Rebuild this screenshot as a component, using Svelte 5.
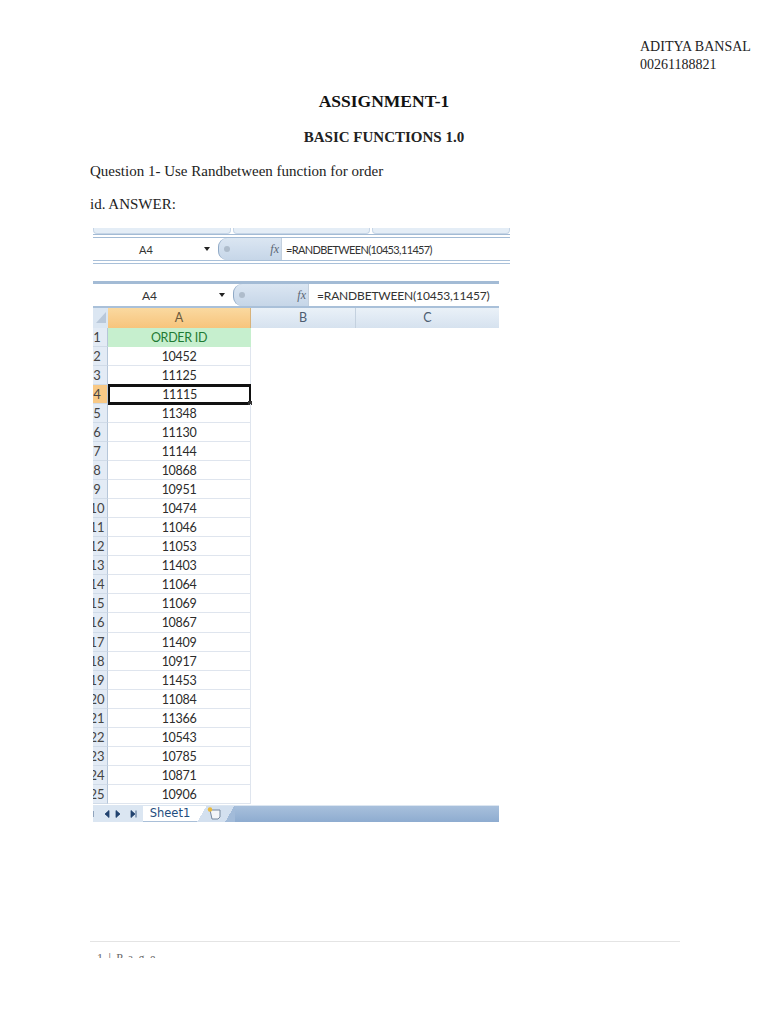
<script lang="ts">
	const ids = [
		10452, 11125, 11115, 11348, 11130, 11144, 10868, 10951, 10474, 11046, 11053, 11403,
		11064, 11069, 10867, 11409, 10917, 11453, 11084, 11366, 10543, 10785, 10871, 10906
	];
	const formula = "=RANDBETWEEN(10453,11457)";
</script>

<main class="page">
	<header class="author">
		<div>ADITYA BANSAL</div>
		<div>00261188821</div>
	</header>

	<h1>ASSIGNMENT-1</h1>
	<h2>BASIC FUNCTIONS 1.0</h2>

	<p class="question">Question 1- Use Randbetween function for order</p>
	<p class="answer">id. ANSWER:</p>

	<div class="crop-bar">
		<div class="ribbon-end">
			<span></span><span></span><span></span>
		</div>
		<div class="formula small">
			<span class="name">A4</span>
			<span class="caret"></span>
			<span class="pill"><i></i><em>fx</em></span>
			<span class="value">{formula}</span>
		</div>
	</div>

	<div class="sheet">
		<div class="formula large">
			<span class="name">A4</span>
			<span class="caret"></span>
			<span class="pill"><i></i><em>fx</em></span>
			<span class="value">{formula}</span>
		</div>

		<div class="grid-head">
			<div class="corner"><svg width="15" height="18" viewBox="0 0 15 18"><path d="M13 4v11H3z" fill="#b9c8da" /></svg></div>
			<div class="col active">A</div>
			<div class="col b">B</div>
			<div class="col c">C</div>
		</div>

		<div class="row">
			<div class="num"><span>1</span></div>
			<div class="cell title">ORDER ID</div>
		</div>
		{#each ids as id, i}
			<div class="row">
				<div class="num" class:on={i === 2}><span>{i + 2}</span></div>
				<div class="cell" class:selected={i === 2}>{id}</div>
			</div>
		{/each}

		<div class="tabs">
			<div class="arrows">
				<svg width="50" height="14" viewBox="0 0 50 14">
					<path d="M0 4v6M16 3.500l-4 3.500 4 3.500zM23 3.500l4 3.500-4 3.500zM38 3.500l4 3.500-4 3.500zM43 3.500v7" fill="#22436f" stroke="#22436f" stroke-width=".8" />
				</svg>
			</div>
			<div class="tab">Sheet1</div>
			<div class="new-tab">
				<svg width="18" height="15" viewBox="0 0 18 15">
					<path d="M5 4h10v7l-2 2H7z" fill="#f4f6f9" stroke="#77889e" />
					<circle cx="5" cy="3.500" r="2.200" fill="#e8b93f" />
				</svg>
			</div>
			<div class="tab-fill"></div>
		</div>
	</div>

	<footer class="foot">
		<span>1 | P a g e</span>
	</footer>
</main>

<style>
	:global(body) {
		background: #fff;
	}

	.page {
		width: 768px;
		height: 1024px;
		box-sizing: border-box;
		padding: 38px 88px 0 90px;
		font-family: "Liberation Serif", "Times New Roman", serif;
		color: #222;
		overflow: hidden;
	}

	.author {
		margin-left: 550px;
		font-size: 14px;
		line-height: 18px;
		white-space: nowrap;
	}

	h1 {
		margin: 18px 0 0 -2px;
		text-align: center;
		font-size: 17.5px;
		line-height: 19px;
		color: #111;
	}

	h2 {
		margin: 17px 0 0 -2px;
		text-align: center;
		font-size: 15px;
		line-height: 19px;
		color: #222;
	}

	.question,
	.answer {
		margin: 0;
		font-size: 15px;
		line-height: 18px;
	}

	.question {
		margin-top: 15px;
	}

	.answer {
		margin-top: 15px;
	}

	.crop-bar {
		margin: 15px 0 0 3px;
		width: 417px;
		font-family: Lato, "Liberation Sans", sans-serif;
	}

	.ribbon-end {
		display: flex;
		gap: 2px;
		height: 6px;
	}

	.ribbon-end span {
		height: 5px;
		border: 1px solid #c6d5e6;
		border-top: 0;
		border-radius: 0 0 4px 4px;
		background: #e4edf6;
		flex: 1;
	}

	.formula {
		display: flex;
		align-items: center;
		box-sizing: border-box;
		color: #333;
		background: #fff;
	}

	.formula.small {
		height: 30px;
		font-size: 11px;
		border-top: 4px double #a3bbd5;
		border-bottom: 4px double #a9c0d9;
	}

	.formula.large {
		height: 27px;
		font-size: 12px;
		border-top: 3px solid #a3bbd5;
		border-bottom: 2px solid #a9c0d9;
	}

	.name {
		flex: none;
	}

	.small .name {
		margin-left: 46px;
		width: 65px;
	}

	.large .name {
		margin-left: 49px;
		width: 77px;
	}

	.caret {
		flex: none;
		width: 0;
		height: 0;
		border: 3px solid transparent;
		border-top: 4px solid #222;
		border-bottom: 0;
	}

	.pill {
		flex: none;
		display: flex;
		align-items: center;
		justify-content: space-between;
		box-sizing: border-box;
		height: 100%;
		margin-left: 8px;
		padding: 0 2px 0 5px;
		border-left: 1px solid #8fa9c6;
		border-radius: 9px 0 0 9px;
		background: linear-gradient(#dbe6f2, #c6d6e8);
		border-right: 1px solid #c3d0de;
	}

	.small .pill {
		width: 64px;
	}

	.large .pill {
		width: 76px;
	}

	.pill i {
		width: 6px;
		height: 6px;
		border-radius: 50%;
		background: #aebccb;
	}

	.pill em {
		font-family: "Liberation Serif", serif;
		font-size: 12px;
		color: #5a6675;
	}

	.small .value {
		margin-left: 4px;
		letter-spacing: -0.650px;
	}

	.large .value {
		margin-left: 8px;
		letter-spacing: -0.170px;
	}

	.sheet {
		margin: 17px 0 0 3px;
		width: 406px;
		font-family: Lato, "Liberation Sans", sans-serif;
		color: #333;
		font-size: 12.500px;
	}

	.grid-head {
		display: flex;
		height: 20px;
		line-height: 20px;
		text-align: center;
		font-size: 12.5px;
		color: #4d5c70;
	}

	.corner {
		width: 15px;
		background: #dbe6f2;
		flex: none;
	}

	.col {
		background: linear-gradient(#eaf1f8, #d6e2ef);
		border-right: 1px solid #c4d1df;
		box-sizing: border-box;
	}

	.col.active {
		width: 143px;
		background: linear-gradient(#fad9a0, #f7c47c);
		border-right: 1px solid #d8b27a;
		color: #6b5a3c;
	}

	.col.b {
		width: 105px;
	}

	.col.c {
		width: 143px;
		border-right: 0;
	}

	.row {
		display: flex;
		height: 19.040px;
		line-height: 19px;
	}

	.num {
		position: relative;
		flex: none;
		width: 15px;
		overflow: hidden;
		background: #e3ebf5;
		border-right: 1px solid #b6c6d9;
		border-bottom: 1px solid #d0dbe8;
		box-sizing: border-box;
		color: #444;
		font-size: 13px;
	}

	.num.on {
		background: #f8c986;
	}

	.num span {
		display: block;
		width: 22px;
		margin-left: -7px;
		text-align: center;
	}

	.cell {
		position: relative;
		box-sizing: border-box;
		width: 143px;
		text-align: center;
		letter-spacing: -0.300px;
		border-right: 1px solid #dfe5ee;
		border-bottom: 1px solid #dfe5ee;
		color: #2b2b2b;
	}

	.cell.title {
		background: #c6efce;
		color: #1e7a34;
		border-color: #c6efce;
	}

	.cell.selected {
		border: 2px solid #111;
		box-shadow: 0 1px 0 #111, 0 -1px 0 #111;
		line-height: 16px;
	}

	.cell.selected::after {
		content: "";
		position: absolute;
		right: -3px;
		bottom: -3px;
		width: 4px;
		height: 4px;
		background: #333;
	}

	.tabs {
		display: flex;
		height: 17px;
		margin-top: 1.500px;
		border-top: 1px solid #dce6f1;
		box-sizing: border-box;
	}

	.arrows {
		flex: none;
		width: 50px;
		background: #dbe6f2;
		overflow: hidden;
		line-height: 0;
		padding-top: 1px;
	}

	.tab {
		flex: none;
		width: 54px;
		text-align: center;
		background: #fff;
		color: #1f4d7e;
		font-family: "DejaVu Sans", sans-serif;
		font-size: 11.500px;
		letter-spacing: 0;
		line-height: 15px;
		border-bottom: 1px solid #a9bfd8;
		box-sizing: border-box;
	}

	.new-tab {
		flex: none;
		width: 38px;
		padding-left: 8px;
		box-sizing: border-box;
		background: linear-gradient(120deg, #fff 0 20%, #d3e0ef 20% 79%, #a2bbd9 79%);
		line-height: 0;
	}

	.tab-fill {
		flex: 1;
		background: linear-gradient(#a8c0dc, #8eacd0);
	}

	.foot {
		margin: 119px 0 0 0;
		width: 590px;
		border-top: 1px solid #e4e4e4;
		padding-top: 8px;
		height: 8px;
		overflow: hidden;
		font-size: 12px;
		line-height: 16px;
		color: #666;
	}

	.foot span {
		display: block;
		margin-left: 7px;
		letter-spacing: 1.200px;
	}
</style>
